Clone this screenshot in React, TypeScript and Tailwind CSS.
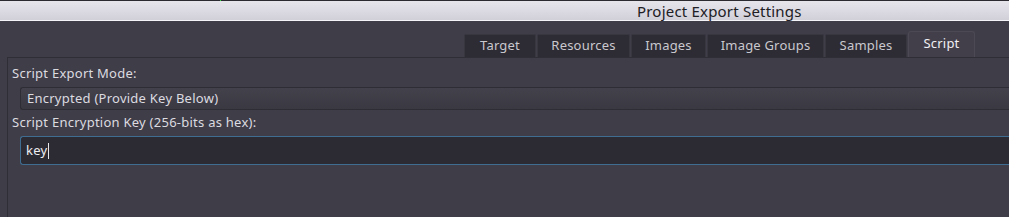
import React from "react";

const tabs = [
  { label: "Target", w: "w-[72px]" },
  { label: "Resources", w: "w-[93px]" },
  { label: "Images", w: "w-[75px]" },
  { label: "Image Groups", w: "w-[117px]" },
  { label: "Samples", w: "w-[82px]" },
];

export default function App() {
  return (
    <div
      className="w-[1009px] h-[217px] overflow-hidden bg-[#3f3d47] text-[#dcdbe0] flex flex-col"
      style={{ fontFamily: '"Noto Sans", "Open Sans", sans-serif' }}
    >
      {/* top strip */}
      <div className="h-[1px] bg-[#2b2a31] flex shrink-0">
        <div className="w-[220px]" />
        <div className="w-[1px] bg-[#33dd44]" />
      </div>
      {/* title bar */}
      <div className="h-[20px] shrink-0 bg-gradient-to-b from-[#e7e5ec] to-[#d1cfd8] border-b border-[#f4f3f7] flex items-center pl-[637px]">
        <span className="text-[15px] leading-[18px] tracking-[0.2px] text-[#202024]">Project Export Settings</span>
      </div>
      {/* tabs */}
      <div className="h-[36px] shrink-0 flex items-end pl-[464px]">
        {tabs.map((t) => (
          <div
            key={t.label}
            className={`${t.w} h-[23px] mr-[1px] bg-[#2d2b33] border border-b-0 border-[#38363f] rounded-t-[2px] flex items-center justify-center text-[13px] tracking-[0.2px] text-[#c9c8ce]`}
          >
            {t.label}
          </div>
        ))}
        <div className="w-[67px] h-[26px] bg-[#423f4a] border border-b-0 border-[#4c4954] rounded-t-[3px] flex items-center justify-center text-[13px] tracking-[0.2px] text-[#f0eff3] pb-[2px]">
          Script
        </div>
      </div>
      {/* panel */}
      <div className="flex-1 ml-[7px] border-t border-l border-[#2f2d35] bg-[#3f3d47] pl-[4px] pt-[6px] tracking-[0.25px]">
        <div className="text-[13px] leading-[19px] h-[19px]">Script Export Mode:</div>
        <div className="mt-[4px] ml-[8px] h-[23px] rounded-l-[3px] border border-r-0 border-[#2e2c34] bg-gradient-to-b from-[#43414b] to-[#3a3841] flex items-center pl-[6px] text-[13px]">
          Encrypted (Provide Key Below)
        </div>
        <div className="mt-[3px] text-[13px] leading-[19px] h-[19px]">Script Encryption Key (256-bits as hex):</div>
        <div className="mt-[4px] ml-[8px] h-[29px] rounded-l-[3px] border border-r-0 border-[#3f6d91] bg-[#2c2a32] flex items-center pl-[5px] text-[13px] text-[#eeeef2]">
          key<span className="inline-block w-[1px] h-[16px] bg-[#e8e8ec] ml-[1px]" />
        </div>
      </div>
    </div>
  );
}
